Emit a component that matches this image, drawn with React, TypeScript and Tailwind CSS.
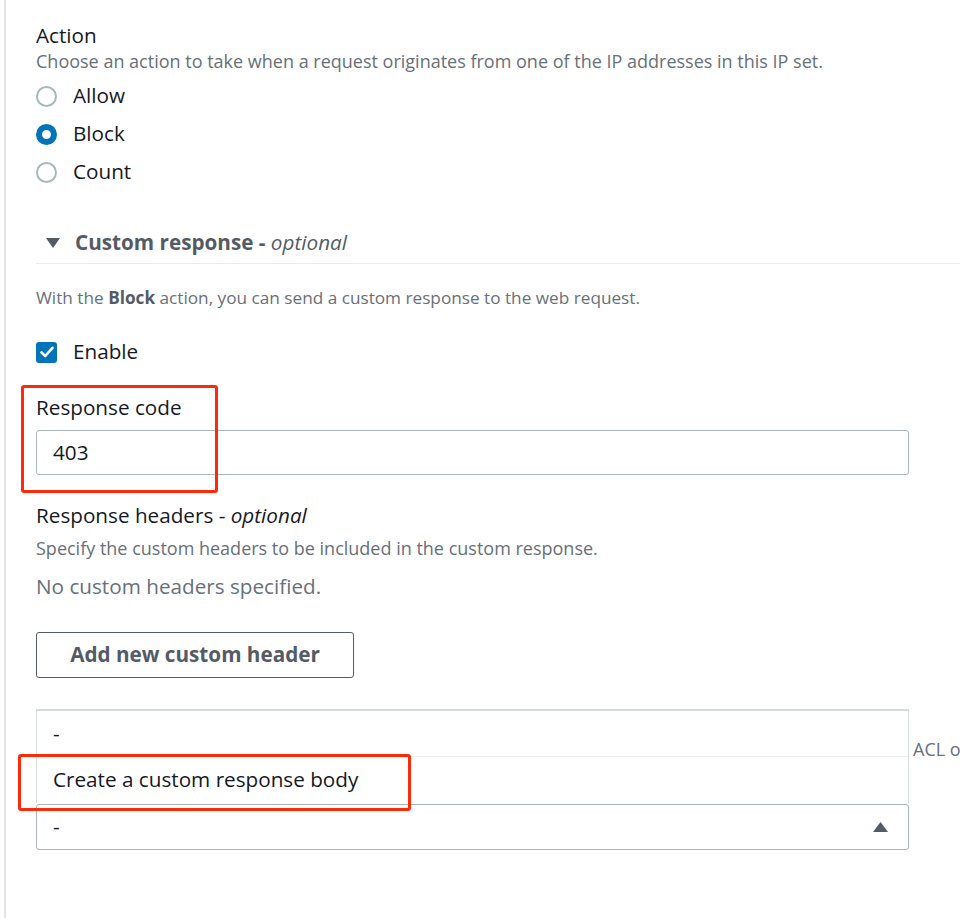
import React from "react";

const font = "font-['Open_Sans',_'Noto_Sans',_sans-serif]";

const Radio = ({ label, checked }: { label: string; checked?: boolean }) => (
  <div className="h-[38px] flex items-center">
    <span
      className={
        checked
          ? "w-[21px] h-[21px] rounded-full border-[6px] border-[#0073bb] bg-white"
          : "w-[21px] h-[21px] rounded-full border-2 border-[#aab7b8] bg-white"
      }
    />
    <span className="ml-[16px] text-[20.7px] text-[#16191f]">{label}</span>
  </div>
);

const App: React.FC = () => {
  return (
    <div className={`relative w-[960px] h-[918px] bg-white overflow-hidden ${font}`}>
      <div className="ml-[4px] h-full border-l-2 border-[#e1e4e4] pl-[30px] pr-[51px]">
        {/* Action */}
        <div className="pt-[23px] text-[20.7px] leading-[24px] text-[#16191f]">Action</div>
        <div className="mt-[3px] text-[18px] leading-[22px] text-[#687078] whitespace-nowrap">
          Choose an action to take when a request originates from one of the IP addresses in this IP set.
        </div>
        <div className="mt-[5px]">
          <Radio label="Allow" />
          <Radio label="Block" checked />
          <Radio label="Count" />
        </div>

        {/* Custom response */}
        <div className="mt-[32px] -mr-[51px] h-[41px] flex items-center border-b border-[#eaeded]">
          <svg width="14" height="11" viewBox="0 0 14 11" className="ml-[10px]">
            <path d="M0 0 L14 0 L7 10 Z" fill="#545b64" />
          </svg>
          <span className="ml-[15px] text-[20.7px] font-bold text-[#545b64]">
            Custom response - <span className="font-normal italic">optional</span>
          </span>
        </div>
        <div className="mt-[23px] text-[17.2px] leading-[22px] text-[#687078] whitespace-nowrap">
          With the <span className="font-bold text-[#545b64]">Block</span> action, you can send a custom response to the web request.
        </div>
        <div className="mt-[28px] h-[30px] flex items-center">
          <span className="w-[21px] h-[21px] rounded-[3px] bg-[#0073bb] flex items-center justify-center">
            <svg width="14" height="12" viewBox="0 0 14 12">
              <path d="M1.5 6.5 L5.2 10 L12.5 1.8" fill="none" stroke="white" strokeWidth="2.6" strokeLinecap="round" strokeLinejoin="round" />
            </svg>
          </span>
          <span className="ml-[16px] text-[20.7px] text-[#16191f]">Enable</span>
        </div>

        {/* Response code */}
        <div className="mt-[28px] text-[20.7px] leading-[24px] text-[#16191f]">Response code</div>
        <div className="mt-[11px] h-[45px] border border-[#aab7b8] rounded-[3px] flex items-center pl-[16px] text-[20.7px] text-[#16191f]">
          403
        </div>

        {/* Response headers */}
        <div className="mt-[28px] text-[20.7px] leading-[24px] text-[#16191f]">
          Response headers - <span className="italic">optional</span>
        </div>
        <div className="mt-[10px] text-[18px] leading-[22px] text-[#687078]">
          Specify the custom headers to be included in the custom response.
        </div>
        <div className="mt-[15px] text-[20.7px] leading-[24px] text-[#687078]">No custom headers specified.</div>
        <button className="mt-[34px] h-[46px] w-[318px] border border-[#545b64] rounded-[3px] text-[20.7px] font-bold text-[#545b64] flex items-center justify-center">
          Add new custom header
        </button>

        {/* Response body */}
        <div className="mt-[28px] text-[20.7px] leading-[24px] text-[#16191f] whitespace-nowrap">
          Choose how you would like to specify the response body - <span className="italic">optional</span>
        </div>
        <div className="mt-[8px] flex text-[18px] leading-[22px] text-[#687078] whitespace-nowrap">
          <span className="w-[877px] shrink-0 overflow-hidden">
            Choose a custom response body that you have defined for this web
          </span>
          <span>ACL or rule group.</span>
        </div>
        <div className="mt-[44px] h-[46px] border border-[#aab7b8] rounded-[3px] flex items-center justify-between pl-[16px] pr-[20px] text-[20.7px] text-[#16191f]">
          <span>-</span>
          <svg width="15" height="10" viewBox="0 0 15 10">
            <path d="M7.5 0 L15 10 L0 10 Z" fill="#545b64" />
          </svg>
        </div>
      </div>

      {/* Open dropdown list */}
      <div className="absolute left-[36px] top-[709px] w-[873px] h-[94px] bg-white border-t-2 border-x border-[#d5dbdb] text-[20.7px] text-[#16191f]">
        <div className="h-[46px] flex items-center pl-[16px] border-b border-[#eaeded]">-</div>
        <div className="h-[46px] flex items-center pl-[16px]">Create a custom response body</div>
      </div>

      {/* Highlight boxes */}
      <div className="absolute left-[21px] top-[385px] w-[197px] h-[108px] border-[3px] border-[#ff2a0a] rounded-[3px]" />
      <div className="absolute left-[18px] top-[754px] w-[393px] h-[57px] border-[3px] border-[#ff2a0a] rounded-[3px]" />
    </div>
  );
};

export default App;
